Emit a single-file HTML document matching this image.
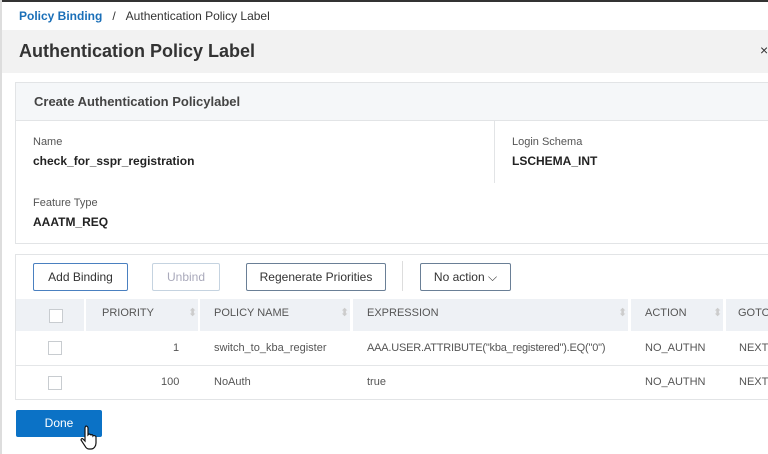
<!DOCTYPE html>
<html><head><style>
*{box-sizing:border-box;margin:0;padding:0}
body{width:768px;height:454px;overflow:hidden;background:#fff;font-family:"Liberation Sans",sans-serif;color:#333;position:relative}
.abs{position:absolute}
.topline{left:0;top:0;width:768px;height:2px;background:#333}
.leftline{left:0;top:0;width:2px;height:454px;background:#ddd}
.bc{left:19px;top:9px;font-size:12px;color:#333}
.bc a{color:#1a6fb8;font-weight:bold;text-decoration:none}
.hdr{left:2px;top:30px;width:766px;height:43px;background:#f2f2f2}
.hdr h1{position:absolute;left:17px;top:11px;font-size:18px;font-weight:bold;color:#333}
.x{left:760px;top:42px;font-size:14px}
.p1{left:15px;top:82px;width:760px;height:162px;border:1px solid #e2e4e6;background:#fff}
.p1h{height:38px;background:#f5f7f9;border-bottom:1px solid #e2e4e6;padding:11px 0 0 18px;font-weight:bold;font-size:13px;color:#444}
.lbl{font-size:11px;color:#555}
.val{font-size:12px;font-weight:bold;color:#222}
.vsep{left:494px;top:121px;width:1px;height:62px;background:#e2e4e6}
.p2{left:15px;top:254px;width:760px;height:146px;border:1px solid #e2e4e6;background:#fff}
.btn{position:absolute;top:263px;height:28px;border:1px solid #6a7f96;border-radius:2px;font-size:12px;text-align:center;line-height:26px;color:#333;background:#fff}
.th{top:299px;height:32px;background:#eef1f5;font-size:11px;color:#555;line-height:28px}
.row{left:16px;width:752px;height:1px;background:#e4e6e8}
.cb{width:14px;height:14px;border:1px solid #c8ccd0;background:#fff}
.td{font-size:11px;color:#555}
.done{left:16px;top:410px;width:86px;height:27px;background:#0b72c6;border-radius:2px;color:#fff;font-size:12px;text-align:center;line-height:27px}
</style></head><body>
<div class="abs topline"></div>
<div class="abs leftline"></div>
<div class="abs bc"><a>Policy Binding</a>&nbsp;&nbsp; / &nbsp;&nbsp;Authentication Policy Label</div>
<div class="abs hdr"><h1>Authentication Policy Label</h1></div>
<div class="abs x">×</div>
<div class="abs p1"><div class="p1h">Create Authentication Policylabel</div></div>
<div class="abs lbl" style="left:33px;top:136px">Name</div>
<div class="abs val" style="left:33px;top:154px">check_for_sspr_registration</div>
<div class="abs vsep"></div>
<div class="abs lbl" style="left:512px;top:136px">Login Schema</div>
<div class="abs val" style="left:512px;top:154px">LSCHEMA_INT</div>
<div class="abs lbl" style="left:33px;top:197px">Feature Type</div>
<div class="abs val" style="left:33px;top:215px">AAATM_REQ</div>
<div class="abs p2"></div>
<div class="btn" style="left:33px;width:95px;border-color:#4a80c0">Add Binding</div>
<div class="btn" style="left:152px;width:68px;border-color:#c5d3e0;color:#aab">Unbind</div>
<div class="btn" style="left:246px;width:140px">Regenerate Priorities</div>
<div class="abs" style="left:402px;top:261px;width:1px;height:30px;background:#ddd"></div>
<div class="btn" style="left:420px;width:91px">No action ⌵</div>
<div class="abs th" style="left:16px;width:68px"><div class="cb abs" style="left:33px;top:10px"></div></div>
<div class="abs th" style="left:86px;width:112px;padding-left:16px">PRIORITY<span class="abs" style="left:102px;color:#ccc">⬍</span></div>
<div class="abs th" style="left:200px;width:150px;padding-left:14px">POLICY NAME<span class="abs" style="left:140px;color:#ccc">⬍</span></div>
<div class="abs th" style="left:353px;width:275px;padding-left:14px">EXPRESSION<span class="abs" style="left:265px;color:#ccc">⬍</span></div>
<div class="abs th" style="left:631px;width:92px;padding-left:14px">ACTION<span class="abs" style="left:82px;color:#ccc">⬍</span></div>
<div class="abs th" style="left:726px;width:50px;padding-left:12px">GOTO</div>
<div class="abs cb" style="left:48px;top:341px"></div>
<div class="abs td" style="left:173px;top:342px">1</div>
<div class="abs td" style="left:214px;top:342px">switch_to_kba_register</div>
<div class="abs td" style="left:367px;top:342px;letter-spacing:-0.2px">AAA.USER.ATTRIBUTE("kba_registered").EQ("0")</div>
<div class="abs td" style="left:645px;top:342px">NO_AUTHN</div>
<div class="abs td" style="left:739px;top:342px">NEXT</div>
<div class="abs row" style="top:365px"></div>
<div class="abs cb" style="left:48px;top:376px"></div>
<div class="abs td" style="left:161px;top:376px">100</div>
<div class="abs td" style="left:214px;top:376px">NoAuth</div>
<div class="abs td" style="left:367px;top:376px">true</div>
<div class="abs td" style="left:645px;top:376px">NO_AUTHN</div>
<div class="abs td" style="left:739px;top:376px">NEXT</div>
<div class="abs done">Done</div>
<svg class="abs" style="left:80px;top:424px" width="20" height="26" viewBox="0 0 20 26"><path d="M6 2c1 0 2 1 2 2v7l1-1c1 0 2 1 2 1 1-1 2 0 2 1 1-1 3 0 3 1v6c0 3-2 6-5 6H9c-2 0-3-1-4-3l-4-6c0-1 1-2 2-1l2 2V4c0-1 1-2 1-2z" fill="#fff" stroke="#111" stroke-width="1.2"/></svg>
</body></html>
